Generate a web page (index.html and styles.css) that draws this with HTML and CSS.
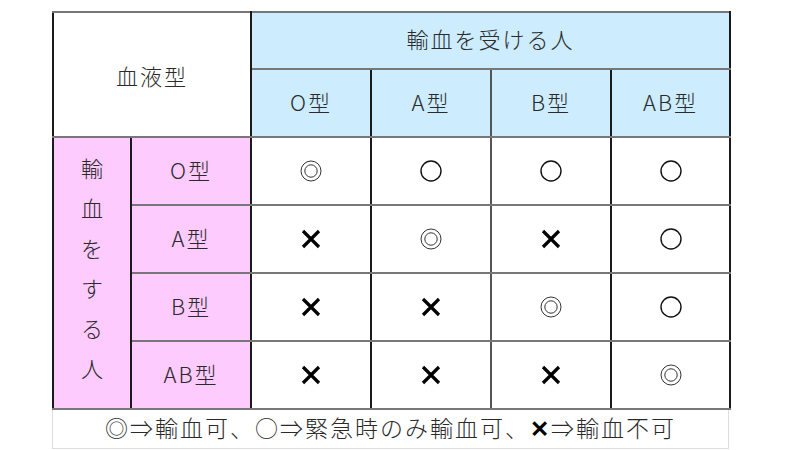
FILE: index.html
```html
<!DOCTYPE html>
<html lang="ja">
<head>
<meta charset="utf-8">
<link rel="stylesheet" href="styles.css">
</head>
<body>
<div class="page">
  <table class="chart">
    <colgroup>
      <col class="c-a"><col class="c-b"><col class="c-d"><col class="c-d"><col class="c-d"><col class="c-e">
    </colgroup>
    <tr class="r-top">
      <td class="corner" colspan="2" rowspan="2">血液型</td>
      <td class="blue" colspan="4">輸血を受ける人</td>
    </tr>
    <tr class="r-head">
      <td class="blue">O型</td>
      <td class="blue v-gray">A型</td>
      <td class="blue">B型</td>
      <td class="blue">AB型</td>
    </tr>
    <tr class="r-body">
      <td class="pink side" rowspan="4"><span class="vert">輸血をする人</span></td>
      <td class="pink">O型</td>
      <td><svg class="sym" viewBox="0 0 24 24"><circle cx="12" cy="12" r="10" class="dbl"/><circle cx="12" cy="12" r="6.2" class="dbl"/></svg></td>
      <td class="v-gray"><svg class="sym" viewBox="0 0 24 24"><circle cx="12" cy="12" r="10" class="one"/></svg></td>
      <td><svg class="sym" viewBox="0 0 24 24"><circle cx="12" cy="12" r="10" class="one"/></svg></td>
      <td><svg class="sym" viewBox="0 0 24 24"><circle cx="12" cy="12" r="10" class="one"/></svg></td>
    </tr>
    <tr class="r-body">
      <td class="pink">A型</td>
      <td><svg class="sym" viewBox="0 0 24 24"><path d="M4 4L20 20M20 4L4 20" class="x"/></svg></td>
      <td class="v-gray"><svg class="sym" viewBox="0 0 24 24"><circle cx="12" cy="12" r="10" class="dbl"/><circle cx="12" cy="12" r="6.2" class="dbl"/></svg></td>
      <td><svg class="sym" viewBox="0 0 24 24"><path d="M4 4L20 20M20 4L4 20" class="x"/></svg></td>
      <td><svg class="sym" viewBox="0 0 24 24"><circle cx="12" cy="12" r="10" class="one"/></svg></td>
    </tr>
    <tr class="r-body">
      <td class="pink">B型</td>
      <td><svg class="sym" viewBox="0 0 24 24"><path d="M4 4L20 20M20 4L4 20" class="x"/></svg></td>
      <td class="v-gray"><svg class="sym" viewBox="0 0 24 24"><path d="M4 4L20 20M20 4L4 20" class="x"/></svg></td>
      <td><svg class="sym" viewBox="0 0 24 24"><circle cx="12" cy="12" r="10" class="dbl"/><circle cx="12" cy="12" r="6.2" class="dbl"/></svg></td>
      <td><svg class="sym" viewBox="0 0 24 24"><circle cx="12" cy="12" r="10" class="one"/></svg></td>
    </tr>
    <tr class="r-body">
      <td class="pink">AB型</td>
      <td><svg class="sym" viewBox="0 0 24 24"><path d="M4 4L20 20M20 4L4 20" class="x"/></svg></td>
      <td class="v-gray"><svg class="sym" viewBox="0 0 24 24"><path d="M4 4L20 20M20 4L4 20" class="x"/></svg></td>
      <td><svg class="sym" viewBox="0 0 24 24"><path d="M4 4L20 20M20 4L4 20" class="x"/></svg></td>
      <td><svg class="sym" viewBox="0 0 24 24"><circle cx="12" cy="12" r="10" class="dbl"/><circle cx="12" cy="12" r="6.2" class="dbl"/></svg></td>
    </tr>
  </table>
  <div class="legend">◎⇒輸血可、○⇒緊急時のみ輸血可、<b class="bx">✕</b>⇒輸血不可</div>
</div>
</body>
</html>
```

FILE: styles.css
```css
html, body {
  margin: 0;
  padding: 0;
  background: #ffffff;
}

.page {
  padding: 11px 0 0 52px;
  width: 677px;
  font-family: "Noto Sans CJK JP", "Noto Sans", sans-serif;
  color: #2a2a2a;
}

.chart {
  border-collapse: collapse;
  table-layout: fixed;
  width: 677px;
}

.c-a { width: 78px; }
.c-b { width: 120px; }
.c-d { width: 120px; }
.c-e { width: 119px; }

.chart td {
  border-top: 2px solid #777;
  border-bottom: 2px solid #777;
  border-left: 2px solid #1a1a1a;
  border-right: 2px solid #1a1a1a;
  text-align: center;
  vertical-align: middle;
  padding: 0;
  font-size: 22px;
  letter-spacing: 2px;
  font-weight: 300;
}

.chart td.blue,
.chart td.pink {
  padding-bottom: 5px;
}

.chart td.side {
  padding-bottom: 0;
}

.chart td.v-gray {
  border-left-color: #555;
  border-right-color: #555;
}

.r-top { height: 57px; }
.r-head { height: 68px; }
.r-body { height: 68px; }

.blue { background: #cdecfe; }
.pink { background: #fecbfe; }
.corner { background: #ffffff; }

.vert {
  display: block;
  width: 22px;
  margin: 0 auto;
  font-size: 22px;
  line-height: 40px;
  word-break: break-all;
  letter-spacing: 0;
  padding-bottom: 12px;
}

.sym {
  display: block;
  width: 24px;
  height: 24px;
  margin: 0 auto;
}

.dbl {
  fill: none;
  stroke: #333;
  stroke-width: 1;
}

.one {
  fill: none;
  stroke: #111;
  stroke-width: 1.4;
}

.x {
  fill: none;
  stroke: #000;
  stroke-width: 3.2;
}

.legend {
  box-sizing: border-box;
  height: 39px;
  border: 1px solid #dddddd;
  border-top: none;
  text-align: center;
  font-size: 23px;
  line-height: 34px;
  letter-spacing: 2px;
  font-weight: 300;
  color: #2a2a2a;
}

.bx {
  font-weight: 700;
  color: #000;
}
```
